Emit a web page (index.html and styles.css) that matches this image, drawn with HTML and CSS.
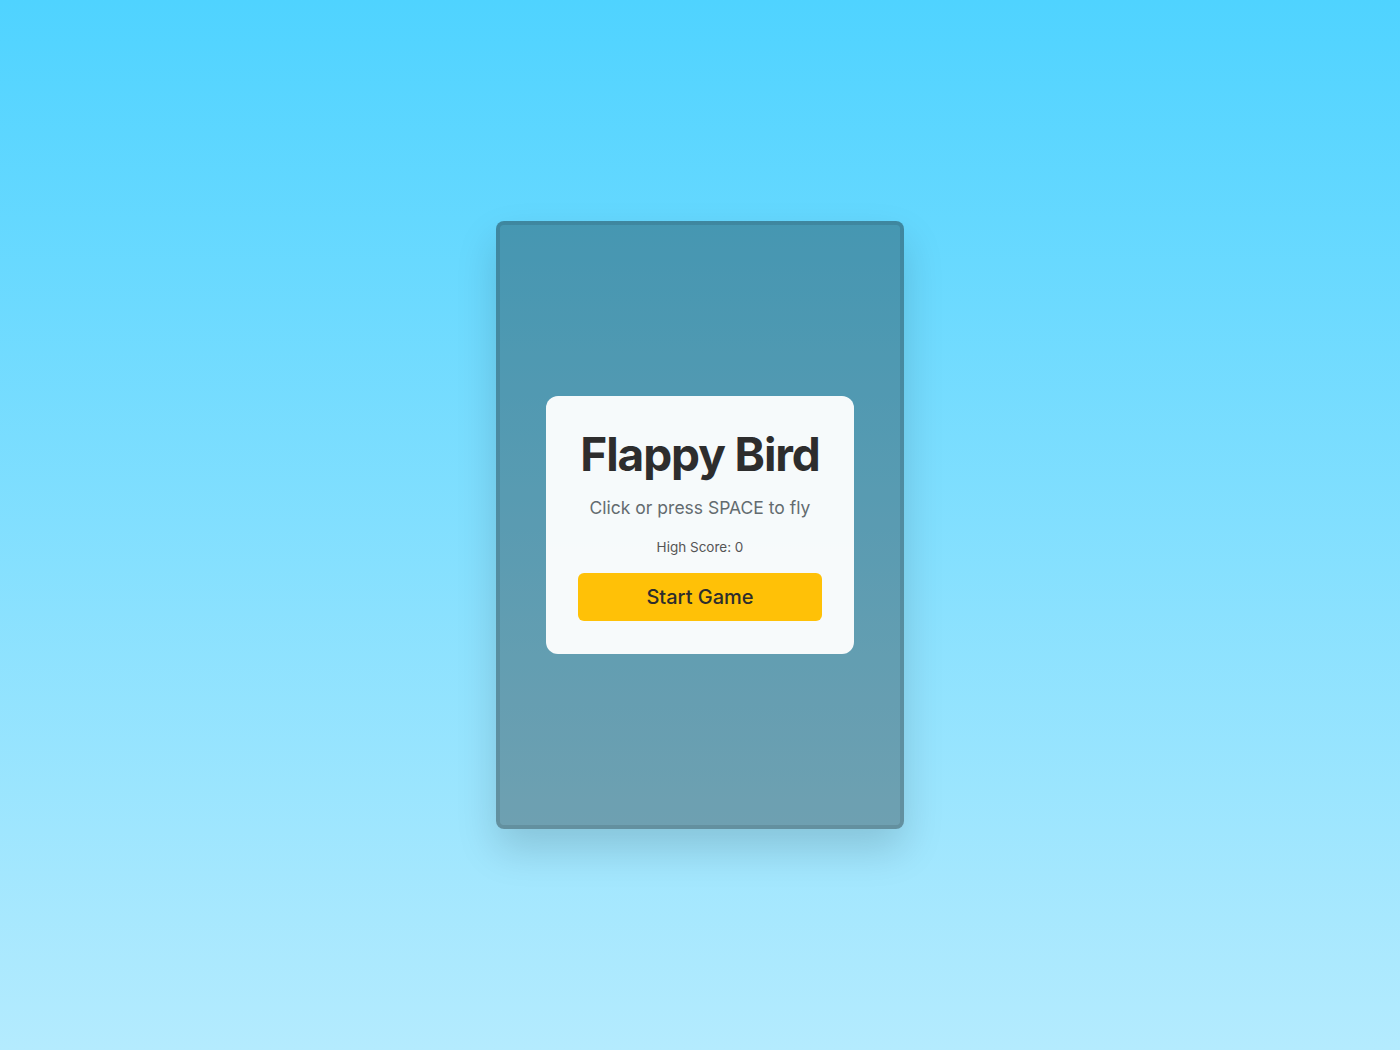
FILE: index.html
```html
<!DOCTYPE html>
<html lang="en">
<head>
<meta charset="utf-8">
<title>Flappy Bird</title>
<link rel="stylesheet" href="styles.css">
</head>
<body>
<div class="game">
  <div class="overlay">
    <div class="card">
      <h1 class="title">Flappy Bird</h1>
      <p class="subtitle">Click or press SPACE to fly</p>
      <p class="score">High Score: 0</p>
      <button class="start">Start Game</button>
    </div>
  </div>
</div>
</body>
</html>
```
FILE: styles.css
```css
html, body {
  margin: 0;
  padding: 0;
}
body {
  min-height: 100vh;
  display: flex;
  align-items: center;
  justify-content: center;
  background: linear-gradient(to bottom, #4fd3ff 0%, #b4ebfe 100%);
  font-family: Inter, "Noto Sans", sans-serif;
}
.game {
  width: 400px;
  height: 600px;
  border: 4px solid rgba(0, 0, 0, 0.1);
  border-radius: 8px;
  background: rgba(0, 0, 0, 0.3);
  box-shadow: 0 20px 40px rgba(0, 0, 0, 0.15);
  display: flex;
}
.overlay {
  flex: 1;
  display: flex;
  align-items: center;
  justify-content: center;
}
.card {
  width: 244px;
  padding: 33px 32px;
  background: rgba(255, 255, 255, 0.95);
  border-radius: 12px;
  text-align: center;
  display: flex;
  flex-direction: column;
  align-items: stretch;
}
.title {
  margin: 0;
  font-size: 46px;
  font-weight: 700;
  line-height: 50px;
  color: #2d2d2d;
  letter-spacing: -1.1px;
  white-space: nowrap;
}
.subtitle {
  margin: 18px 0 0;
  font-size: 17.5px;
  line-height: 21.6px;
  color: #636b6f;
}
.score {
  margin: 20px 0 0;
  font-size: 13.5px;
  line-height: 17px;
  color: #555;
}
.start {
  margin-top: 17px;
  height: 48px;
  border: none;
  border-radius: 6px;
  background: #ffc107;
  color: #2d2d2d;
  font-family: inherit;
  font-size: 20px;
  font-weight: 500;
}
```
